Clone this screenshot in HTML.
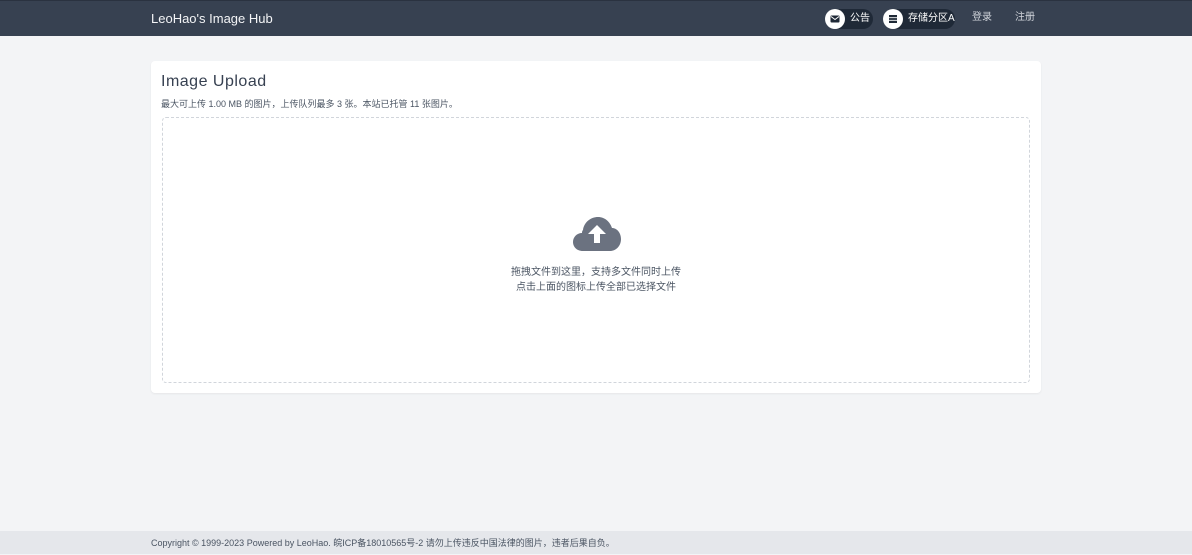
<!DOCTYPE html>
<html><head><meta charset="utf-8"><style>
*{margin:0;padding:0;box-sizing:border-box}
body{width:1192px;height:554px;background:#f3f4f6;font-family:"Liberation Sans","Noto Sans CJK SC",sans-serif;position:relative;overflow:hidden}
.nav{position:absolute;left:0;top:0;width:1192px;height:36px;background:#374151;border-top:1px solid #2a3240}
.brand{position:absolute;left:151px;top:10px;color:#f3f4f6;font-size:13px}
.pill{position:absolute;top:8px;height:20px;border-radius:10px;background:#1f2937;color:#fff;font-size:10px;line-height:20px}
.pill .c{position:absolute;left:0;top:0;width:20px;height:20px;border-radius:50%;background:#fff}
.pill span{position:absolute;left:25px;top:0;line-height:20px}
.lnk{position:absolute;top:10px;color:#d1d5db;font-size:10px;line-height:14px}
.card{position:absolute;left:151px;top:61px;width:890px;height:332px;background:#fff;border-radius:4px;box-shadow:0 1px 2px rgba(0,0,0,.06)}
h1{position:absolute;left:10px;top:12px;font-size:16px;font-weight:normal;color:#374151;letter-spacing:.5px}
.sub{position:absolute;left:10px;top:36px;font-size:9px;color:#4b5563}
.drop{position:absolute;left:11px;top:56px;width:868px;height:266px;border:1px dashed #d1d5db;border-radius:4px}
.t{position:absolute;left:0;width:100%;text-align:center;font-size:10px;color:#4b5563}
.foot{position:absolute;left:0;top:531px;width:1192px;height:23px;background:#e5e7eb;color:#4b5563;font-size:9px;line-height:24px;padding-left:151px}
</style></head><body>
<div class="nav">
<div class="brand">LeoHao's Image Hub</div>
<div class="pill" style="left:825px;width:48px"><div class="c"><svg width="20" height="20"><rect x="5.5" y="6.5" width="9" height="7" rx="1" fill="#1f2937"/><path d="M6 7.5l4 3 4-3" stroke="#fff" fill="none" stroke-width="1"/></svg></div><span>公告</span></div>
<div class="pill" style="left:883px;width:72px"><div class="c"><svg width="20" height="20"><rect x="6" y="6" width="8" height="8" fill="#1f2937"/><path d="M6 8.7h8M6 11.3h8" stroke="#fff" stroke-width="0.8"/></svg></div><span>存储分区A</span></div>
<div class="lnk" style="left:972px">登录</div>
<div class="lnk" style="left:1015px">注册</div>
</div>
<div class="card">
<h1>Image Upload</h1>
<div class="sub">最大可上传 1.00 MB 的图片，上传队列最多 3 张。本站已托管 11 张图片。</div>
<div class="drop">
<svg style="position:absolute;left:409px;top:98px" width="50" height="36" viewBox="0 0 50 36"><path d="M11 35C4 35 1 30 1 26c0-5 4-9 9-9 0-1 0-2 1-3C12 6 19 1 26 1c7 0 12 5 14 11 5 0 9 5 9 11 0 7-5 12-11 12z" fill="#6b7280"/><path d="M25 9l-9 9h6v9h6v-9h6z" fill="#fff"/></svg>
<div class="t" style="top:145px">拖拽文件到这里，支持多文件同时上传</div>
<div class="t" style="top:160px">点击上面的图标上传全部已选择文件</div>
</div>
</div>
<div class="foot">Copyright © 1999-2023 Powered by LeoHao. 皖ICP备18010565号-2 请勿上传违反中国法律的图片，违者后果自负。</div>
</body></html>
